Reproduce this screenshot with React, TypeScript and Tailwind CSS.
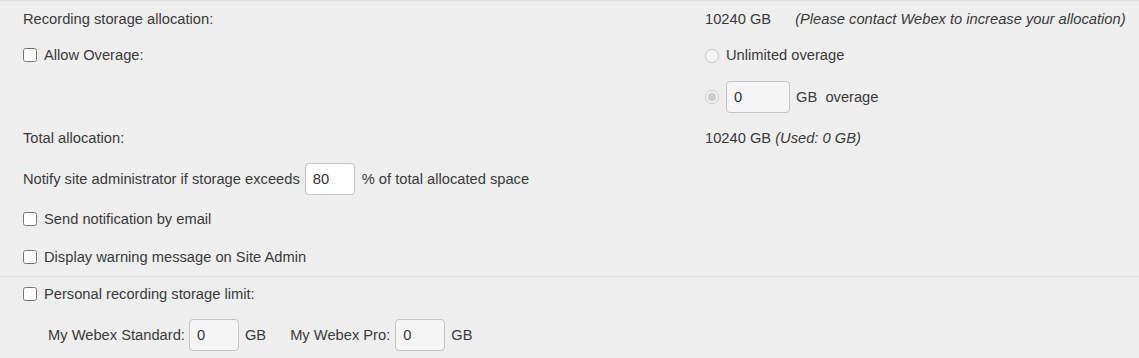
import React from "react";

const font = { fontFamily: '"Liberation Sans", Arial, sans-serif' };

function Check({ label }: { label: string }) {
  return (
    <label className="flex items-center gap-[7px]">
      <input type="checkbox" className="m-0 h-[14px] w-[14px]" />
      <span>{label}</span>
    </label>
  );
}

function Box({ value, w, disabledLook }: { value: string; w: string; disabledLook?: boolean }) {
  return (
    <input
      type="text"
      defaultValue={value}
      className={`${w} h-[32px] rounded-[4px] border border-[#c4c4c4] px-[7px] text-[14.7px] text-[#333] outline-none ${
        disabledLook ? "bg-[#f5f5f5]" : "bg-white"
      }`}
    />
  );
}

export default function App() {
  return (
    <div style={font} className="w-[1139px] h-[358px] overflow-hidden bg-[#eeeeee] text-[14.7px] text-[#3a3a3a] border-t border-[#dcdcdc]">
      <div className="grid grid-cols-[682px_1fr] pl-[23px]">
        <div className="h-[36px] flex items-center">Recording storage allocation:</div>
        <div className="h-[36px] flex items-center whitespace-nowrap">
          <span>10240 GB</span>
          <span className="ml-[24px] italic">(Please contact Webex to increase your allocation)</span>
        </div>

        <div className="h-[37px] flex items-center">
          <Check label="Allow Overage:" />
        </div>
        <div className="h-[37px] flex items-center gap-[7px]">
          <input type="radio" name="ov" disabled className="m-0 h-[14px] w-[14px]" />
          <span>Unlimited overage</span>
        </div>

        <div className="h-[46px]" />
        <div className="h-[46px] flex items-center">
          <input type="radio" name="ov" disabled defaultChecked className="m-0 h-[14px] w-[14px]" />
          <span className="ml-[7px]">
            <Box value="0" w="w-[64px]" disabledLook />
          </span>
          <span className="ml-[6px] whitespace-pre">GB  overage</span>
        </div>

        <div className="h-[37px] flex items-center">Total allocation:</div>
        <div className="h-[37px] flex items-center">
          <span>10240 GB</span>
          <span className="ml-[4px] italic">(Used: 0 GB)</span>
        </div>

        <div className="col-span-2 h-[44px] flex items-center">
          <span>Notify site administrator if storage exceeds</span>
          <span className="ml-[5px]">
            <Box value="80" w="w-[50px]" />
          </span>
          <span className="ml-[7px]">% of total allocated space</span>
        </div>

        <div className="col-span-2 h-[37px] flex items-center">
          <Check label="Send notification by email" />
        </div>
        <div className="col-span-2 h-[38px] flex items-center">
          <Check label="Display warning message on Site Admin" />
        </div>
      </div>

      <div className="h-px bg-[#dcdcdc]" />

      <div className="pl-[23px]">
        <div className="h-[35px] flex items-center">
          <Check label="Personal recording storage limit:" />
        </div>
        <div className="h-[46px] flex items-center pl-[25px]">
          <span>My Webex Standard:</span>
          <span className="ml-[4px]">
            <Box value="0" w="w-[50px]" disabledLook />
          </span>
          <span className="ml-[6px]">GB</span>
          <span className="ml-[24px]">My Webex Pro:</span>
          <span className="ml-[5px]">
            <Box value="0" w="w-[50px]" disabledLook />
          </span>
          <span className="ml-[6px]">GB</span>
        </div>
      </div>
    </div>
  );
}
